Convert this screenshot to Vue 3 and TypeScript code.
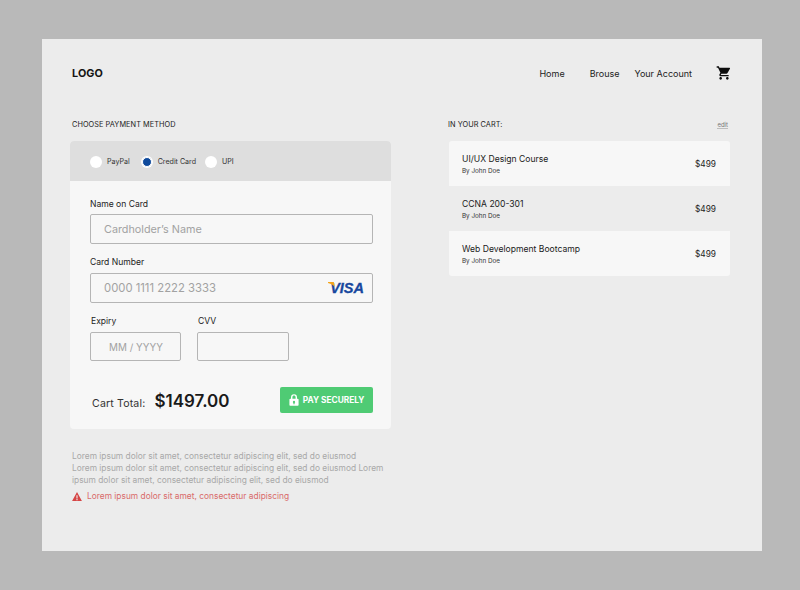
<script setup lang="ts">
interface CartItem { title: string; author: string; price: string; tinted: boolean }
const items: CartItem[] = [
  { title: 'UI/UX Design Course', author: 'By John Doe', price: '$499', tinted: true },
  { title: 'CCNA 200-301', author: 'By John Doe', price: '$499', tinted: false },
  { title: 'Web Development Bootcamp', author: 'By John Doe', price: '$499', tinted: true },
]
const methods = [
  { name: 'PayPal', on: false },
  { name: 'Credit Card', on: true },
  { name: 'UPI', on: false },
]
</script>

<template>
  <div class="page">
    <main class="panel">
      <header class="top">
        <div class="logo">LOGO</div>
        <nav class="nav">
          <a class="home">Home</a>
          <a class="browse">Brouse</a>
          <a class="account">Your Account</a>
          <svg class="cart" viewBox="0 0 24 24" width="16" height="16"><path fill="#0d0d0d" d="M7 18c-1.100 0-1.990.9-1.990 2S5.900 22 7 22s2-.9 2-2-.9-2-2-2zM1 2v2h2l3.600 7.590-1.350 2.450c-.16.28-.25.61-.25.96 0 1.100.9 2 2 2h12v-2H7.420c-.14 0-.25-.11-.25-.25l.03-.12.9-1.630h7.450c.75 0 1.410-.41 1.750-1.030l3.580-6.490A1 1 0 0 0 20 4H5.210l-.94-2H1zm16 16c-1.100 0-1.990.9-1.990 2s.89 2 1.990 2 2-.9 2-2-.9-2-2-2z"/></svg>
        </nav>
      </header>

      <div class="cols">
        <section class="left">
          <h2 class="heading pay-head">CHOOSE PAYMENT METHOD</h2>
          <div class="card">
            <div class="tabs">
              <label v-for="m in methods" :key="m.name" class="tab">
                <span class="radio" :class="{ on: m.on }"></span>
                <span>{{ m.name }}</span>
              </label>
            </div>
            <form class="form" @submit.prevent>
              <div class="label">Name on Card</div>
              <div class="input wide">Cardholder’s Name</div>
              <div class="label second">Card Number</div>
              <div class="input wide number">
                <span>0000 1111 2222 3333</span>
                <span class="visa">
                  <span class="visa-text">VISA</span>
                  <svg class="swoosh" viewBox="0 0 10 6" width="8" height="5"><path fill="#f4a51c" d="M0 0h6c1 0 1.500.5 1.700 1.300L8.500 6C7 4 4 2 0 1z"/></svg>
                </span>
              </div>
              <div class="split">
                <div class="expiry">
                  <div class="label small-l">Expiry</div>
                  <div class="input short">MM / YYYY</div>
                </div>
                <div class="cvv">
                  <div class="label small-l">CVV</div>
                  <div class="input short"></div>
                </div>
              </div>
              <div class="total-row">
                <div class="total">
                  <span class="total-l">Cart Total:</span>
                  <span class="total-v">$1497.00</span>
                </div>
                <button class="pay" type="button">
                  <svg viewBox="0 0 12 14" width="10" height="12"><path fill="#fff" fill-rule="evenodd" d="M6 0a3.600 3.600 0 0 0-3.600 3.600V5.500H1.500A1 1 0 0 0 .5 6.500v6.500a1 1 0 0 0 1 1h9a1 1 0 0 0 1-1V6.500a1 1 0 0 0-1-1h-.9V3.600A3.600 3.600 0 0 0 6 0zm0 1.700c1.050 0 1.900.85 1.900 1.900v1.900H4.100V3.600c0-1.050.85-1.900 1.900-1.900zM6 8a1.400 1.400 0 0 1 .7 2.600V12H5.300v-1.400A1.400 1.400 0 0 1 6 8z"/></svg>
                  <span>PAY SECURELY</span>
                </button>
              </div>
            </form>
          </div>
          <div class="notes">
            <p>Lorem ipsum dolor sit amet, consectetur adipiscing elit, sed do eiusmod</p>
            <p>Lorem ipsum dolor sit amet, consectetur adipiscing elit, sed do eiusmod Lorem ipsum dolor sit amet, consectetur adipiscing elit, sed do eiusmod</p>
            <p class="error">
              <svg viewBox="0 0 12 11" width="10" height="9"><path fill="#d64545" fill-rule="evenodd" d="M6 0l6 11H0zM5.300 4v3.800h1.400V4zm0 4.700v1.300h1.400V8.700z"/></svg>
              <span>Lorem ipsum dolor sit amet, consectetur adipiscing</span>
            </p>
          </div>
        </section>

        <section class="right">
          <div class="cart-head">
            <h2 class="heading">IN YOUR CART:</h2>
            <a class="edit">edit</a>
          </div>
          <ul class="list">
            <li v-for="it in items" :key="it.title" class="item" :class="{ tinted: it.tinted }">
              <div class="info">
                <div class="title">{{ it.title }}</div>
                <div class="author">{{ it.author }}</div>
              </div>
              <div class="price">{{ it.price }}</div>
            </li>
          </ul>
        </section>
      </div>
    </main>
  </div>
</template>

<style>
html, body { margin: 0; background: #b9b9b9; }
</style>

<style scoped>
* { box-sizing: border-box; }
.page {
  width: 800px; height: 590px; padding: 39px 38px 39px 42px;
  background: #b9b9b9; font-family: Inter, "Liberation Sans", sans-serif; color: #1a1a1a;
  overflow: hidden;
}
.panel { height: 512px; background: #ececec; padding: 0 32px 0 28px; }
.top { height: 68px; margin-bottom: 12px; padding: 0 0 0 2px; display: flex; justify-content: space-between; align-items: center; }
.logo { font-size: 10.800px; font-weight: 700; letter-spacing: 0.1px; color: #141414; }
.nav { display: flex; align-items: center; font-size: 9px; color: #222; }
.home { margin-right: 25px; }
.browse { margin-right: 15px; }
.account { margin-right: 24px; }
.cart { margin-right: -2px; display: block; }
.cols { display: flex; }
.left { width: 321px; margin-right: 58px; }
.right { width: 281px; }
.heading { margin: 0; font-size: 7.350px; font-weight: 400; line-height: 12px; color: #222; letter-spacing: 0.05px; }
.pay-head { padding-left: 2px; }
.card { margin-top: 10px; height: 288px; background: #f7f7f7; border-radius: 4px; overflow: hidden; }
.tabs { height: 40px; background: #dedede; padding: 1px 0 0 20px; display: flex; align-items: center; font-size: 7.100px; color: #333; }
.tab { display: flex; align-items: center; gap: 5px; margin-right: 9px; }
.tab:first-child { margin-right: 11px; }
.radio { width: 12px; height: 12px; border-radius: 50%; background: #fff; display: block; }
.radio.on { background: #0f4a9c; border: 1px solid #fff; box-shadow: 0 0 0 1px #fff; width: 10px; height: 10px; margin: 1px; }
.form { padding: 17px 18px 0 20px; }
.label { font-size: 8.550px; line-height: 12px; color: #222; }
.second { margin-top: 12px; }
.input {
  margin-top: 4px; border: 1px solid #b5b5b5; border-radius: 2px; background: #f7f7f7;
  color: #a2a2a2; display: flex; align-items: center;
}
.wide { height: 30px; padding-left: 13px; font-size: 10.800px; }
.number { margin-top: 5px; justify-content: space-between; padding-right: 8px; font-size: 11.300px; }
.visa { display: block; position: relative; }
.visa-text { display: block; font-family: "Liberation Sans", sans-serif; font-weight: 700; font-style: italic; font-size: 14.500px; color: #17479e; -webkit-text-stroke: 0.3px #17479e; letter-spacing: 0; line-height: 13px; }
.swoosh { position: absolute; left: -2px; top: 0; display: block; }
.split { display: flex; margin-top: 12px; }
.expiry { width: 91px; margin-right: 16px; }
.cvv { width: 92px; }
.small-l { padding-left: 1px; }
.short { height: 29px; margin-top: 5px; justify-content: center; font-size: 9.900px; padding-left: 1px; }
.total-row { margin-top: 26px; height: 26px; display: flex; justify-content: space-between; align-items: center; padding-left: 2px; }
.total { display: flex; align-items: baseline; padding-top: 2px; }
.total-l { font-size: 10.600px; color: #333; margin-right: 9px; letter-spacing: 0.15px; }
.total-v { font-size: 17px; font-weight: 600; color: #1a1a1a; }
.pay {
  width: 93px; height: 26px; border: 0; border-radius: 2px; background: #4fcb74; color: #fff;
  font: 700 8.300px Inter, "Liberation Sans", sans-serif; display: flex; align-items: center; justify-content: center; gap: 4px; padding: 0;
}
.notes { margin-top: 21px; padding-left: 2px; font-size: 8.400px; line-height: 12px; color: #a8a8a8; }
.notes p { margin: 0; }
.error { margin-top: 4px !important; color: #d96a6a; display: flex; align-items: center; gap: 5px; }
.cart-head { display: flex; justify-content: space-between; align-items: center; margin-left: -1px; height: 12px; }
.edit { font-size: 6px; color: #777; border-bottom: 1px solid #bdbdbd; line-height: 7px; margin-right: 2px; }
.list { list-style: none; margin: 10px 0 0; padding: 0; }
.item { height: 45px; padding: 0 14px 0 13px; display: flex; justify-content: space-between; align-items: center; }
.tinted { background: #f7f7f7; }
.item:first-child { border-radius: 3px 3px 0 0; }
.item:last-child { border-radius: 0 0 3px 3px; }
.info { padding-top: 2px; }
.title { font-size: 8.600px; line-height: 12px; color: #1a1a1a; }
.author { font-size: 6.300px; line-height: 9px; color: #333; margin-top: 2px; }
.price { font-size: 8.300px; color: #222; }
</style>
